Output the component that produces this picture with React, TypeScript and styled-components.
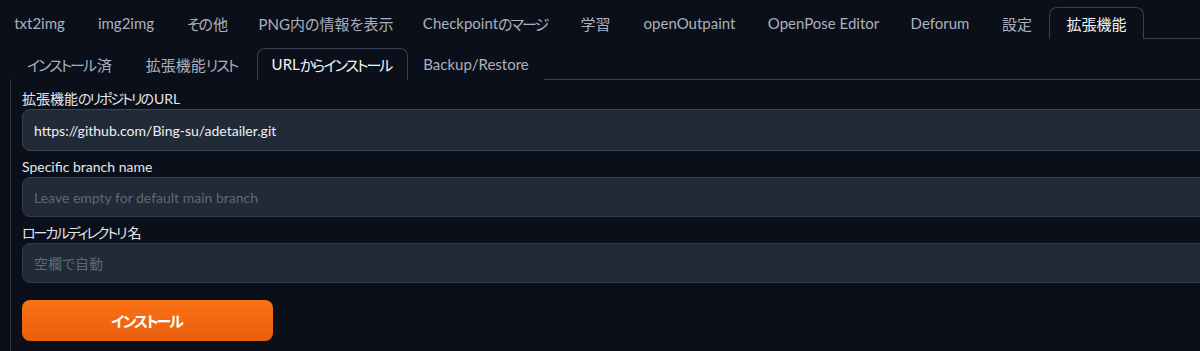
import React from "react";
import styled, { createGlobalStyle } from "styled-components";

const GlobalStyle = createGlobalStyle`
  html, body {
    margin: 0;
    padding: 0;
    background: #0b0f19;
    overflow: hidden;
  }
  body {
    font-family: "Lato", "Noto Sans CJK JP", sans-serif;
    font-feature-settings: "palt";
    color: #e5e7eb;
  }
  * { box-sizing: border-box; }
`;

const Page = styled.div`
  width: 1230px;
  height: 351px;
  background: #0b0f19;
`;

const TopBar = styled.div`
  display: flex;
  align-items: flex-end;
  padding-top: 7px;
  margin-left: -2px;
  border-bottom: 1px solid #374151;
`;

const Tab = styled.div<{ $w: number; $active?: boolean }>`
  flex: none;
  width: ${(p) => p.$w}px;
  height: 32px;
  display: flex;
  align-items: center;
  justify-content: center;
  font-size: 15px;
  white-space: nowrap;
  color: ${(p) => (p.$active ? "#f3f4f6" : "#a9b1be")};
  border: 1px solid ${(p) => (p.$active ? "#374151" : "transparent")};
  border-bottom: none;
  border-radius: 8px 8px 0 0;
  background: #0b0f19;
  margin-bottom: -1px;
  padding-bottom: 1px;
`;

const Kana = styled.span`
  letter-spacing: -2px;
  margin-right: 2px;
`;

const Body = styled.div`
  padding-top: 9px;
  padding-left: 10px;
`;

const SubBar = styled.div`
  display: flex;
  align-items: flex-end;
  padding-left: 1px;
`;

const Panel = styled.div`
  display: flex;
  flex-direction: column;
  align-items: stretch;
  border-top: 1px solid #374151;
  border-left: 1px solid #2b3340;
  padding: 9px 0 0 11px;
  height: 280px;
`;

const Field = styled.div`
  display: flex;
  flex-direction: column;
  margin-bottom: 6px;
`;

const Label = styled.div`
  height: 20px;
  line-height: 20px;
  font-size: 14px;
  color: #e5e7eb;
`;

const Input = styled.div<{ $h: number; $placeholder?: boolean }>`
  height: ${(p) => p.$h}px;
  display: flex;
  align-items: center;
  padding-left: 11px;
  background: #212a37;
  border: 1px solid ${(p) => (p.$placeholder ? "#323b49" : "#3b4453")};
  border-radius: 8px;
  font-size: 14px;
  color: ${(p) => (p.$placeholder ? "#5f6875" : "#eef0f3")};
`;

const Button = styled.button`
  margin-top: 11px;
  width: 251px;
  height: 41px;
  flex: none;
  border: none;
  border-radius: 8px;
  background: linear-gradient(180deg, #f97316 0%, #ea5e0c 100%);
  color: #ffffff;
  font-family: "Lato", "Noto Sans CJK JP", sans-serif;
  font-feature-settings: "palt";
  font-size: 15px;
  font-weight: 700;
  display: flex;
  align-items: center;
  justify-content: center;
  cursor: pointer;
`;

function Jp({ text }: { text: string }) {
  const parts = text.split(/([\u3040-\u30ff\u30fc]+)/).filter((s) => s !== "");
  return (
    <>
      {parts.map((s, i) =>
        /[\u3040-\u30ff]/.test(s) ? <Kana key={i}>{s}</Kana> : <React.Fragment key={i}>{s}</React.Fragment>
      )}
    </>
  );
}

const topTabs: [string, number][] = [
  ["txt2img", 83],
  ["img2img", 90],
  ["その他", 73],
  ["PNG内の情報を表示", 164],
  ["Checkpointのマージ", 156],
  ["学習", 63],
  ["openOutpaint", 125],
  ["OpenPose Editor", 143],
  ["Deforum", 90],
  ["設定", 64],
  ["拡張機能", 95],
];

const subTabs: [string, number][] = [
  ["インストール済", 117],
  ["拡張機能リスト", 129],
  ["URLからインストール", 151],
  ["Backup/Restore", 136],
];

export default function App() {
  return (
    <Page>
      <GlobalStyle />
      <TopBar>
        {topTabs.map(([t, w]) => (
          <Tab key={t} $w={w} $active={t === "拡張機能"}>
            <Jp text={t} />
          </Tab>
        ))}
      </TopBar>
      <Body>
        <SubBar>
          {subTabs.map(([t, w]) => (
            <Tab key={t} $w={w} $active={t === "URLからインストール"}>
              <Jp text={t} />
            </Tab>
          ))}
        </SubBar>
        <Panel>
          <Field>
            <Label>
              <Jp text="拡張機能のリポジトリのURL" />
            </Label>
            <Input $h={42}>https://github.com/Bing-su/adetailer.git</Input>
          </Field>
          <Field>
            <Label>Specific branch name</Label>
            <Input $h={40} $placeholder>
              Leave empty for default main branch
            </Input>
          </Field>
          <Field>
            <Label>
              <Jp text="ローカルディレクトリ名" />
            </Label>
            <Input $h={40} $placeholder>
              <Jp text="空欄で自動" />
            </Input>
          </Field>
          <Button>
            <Jp text="インストール" />
          </Button>
        </Panel>
      </Body>
    </Page>
  );
}
